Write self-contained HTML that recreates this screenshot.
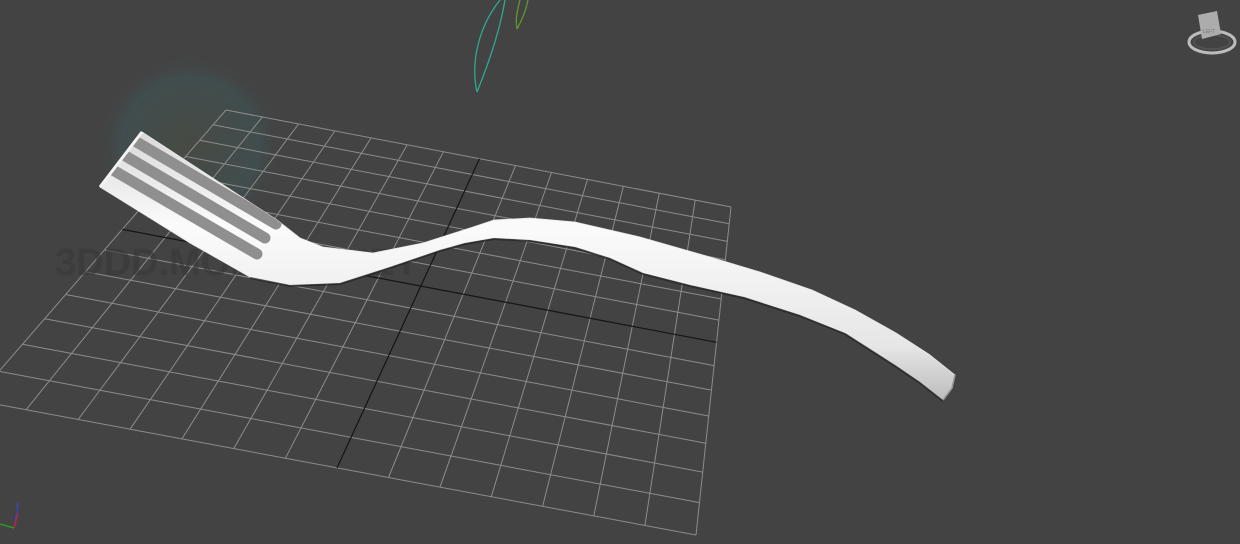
<!DOCTYPE html>
<html><head><meta charset="utf-8"><style>
html,body{margin:0;padding:0;background:#434343;overflow:hidden}
svg{display:block}
</style></head><body>
<svg id="s" width="1240" height="544" viewBox="0 0 1240 544" xmlns="http://www.w3.org/2000/svg">
<defs>
<radialGradient id="glow" cx="0.5" cy="0.5" r="0.5">
<stop offset="0" stop-color="#4a4f45" stop-opacity="0.6"/>
<stop offset="0.75" stop-color="#3f5455" stop-opacity="0.6"/>
<stop offset="1" stop-color="#434343" stop-opacity="0"/>
</radialGradient>
<linearGradient id="hg" x1="0" y1="0" x2="0" y2="1">
<stop offset="0" stop-color="#d8d8d8"/>
<stop offset="0.35" stop-color="#fbfbfb"/>
<stop offset="0.8" stop-color="#e6e6e6"/>
<stop offset="1" stop-color="#bdbdbd"/>
</linearGradient>
<clipPath id="fc"><path d="M100,187 L142,132 L277,220 L300,238 L323,247 L373,253 L423,243 L473,227 L494,220 L530,218 L575,222 L640,237 L710,257 L760,272 L812,290 L855,310 L896,333 L930,355 L955,375 L952,388 L943,400 L920,382 L895,365 L845,333 L800,315 L744,297 L690,285 L643,273 L610,258 L575,247 L530,240 L494,238 L465,243 L440,250 L390,267 L340,283 L290,285 L250,277 L190,243 Z"/></clipPath>
</defs>
<rect width="1240" height="544" fill="#434343"/>
<ellipse cx="190" cy="145" rx="92" ry="90" fill="url(#glow)"/>
<g id="grid" stroke="#8c8c8c" stroke-width="1" fill="none"></g>
<g id="axes" stroke="#151515" stroke-width="1.2" fill="none"></g>
<text x="55" y="275" font-family="Liberation Sans, sans-serif" font-weight="bold" font-size="38" fill="#383838" opacity="0.6">3DDD.MODELS.NET</text>
<path d="M100,187 L142,132 L277,220 L300,238 L323,247 L373,253 L423,243 L473,227 L494,220 L530,218 L575,222 L640,237 L710,257 L760,272 L812,290 L855,310 L896,333 L930,355 L955,375 L952,388 L943,400 L920,382 L895,365 L845,333 L800,315 L744,297 L690,285 L643,273 L610,258 L575,247 L530,240 L494,238 L465,243 L440,250 L390,267 L340,283 L290,285 L250,277 L190,243 Z" fill="url(#hg)" stroke="#e8e8e8" stroke-width="0.8" stroke-linejoin="round"/>
<path d="M250,278 L290,286 L340,284 L390,268 L440,251 L465,244 L494,239 L530,241 L575,248 L610,259 L643,274 L690,286 L744,298 L800,316 L845,334 L895,366 L920,383 L943,401" fill="none" stroke="#222" stroke-width="2" opacity="0.7" stroke-linejoin="round"/>
<g clip-path="url(#fc)" stroke="#8f8f8f" stroke-width="11" stroke-linecap="round">
<line x1="128" y1="137" x2="276" y2="224"/>
<line x1="117" y1="151" x2="265" y2="238"/>
<line x1="106" y1="166" x2="257" y2="254"/>
</g>
<path d="M100,187 L142,132" stroke="#f4f4f4" stroke-width="3"/>
<path d="M955,375 L952,388 L943,400" stroke="#999" stroke-width="1.5" fill="none"/>
<path d="M477,92 C470,60 480,25 500,0 M477,92 C490,60 500,30 505,0" stroke="#2fa88e" stroke-width="1.3" fill="none"/>
<path d="M517,29 C515,18 518,8 520,0 M517,29 C522,20 526,10 528,0" stroke="#5a9a2a" stroke-width="1.3" fill="none"/>
<ellipse cx="1212" cy="42" rx="23" ry="11" fill="none" stroke="#bcbcbc" stroke-width="3"/>
<ellipse cx="1212" cy="42" rx="18" ry="7" fill="none" stroke="#555" stroke-width="1.5"/>
<polygon points="1198,15 1217,11 1221,34 1202,39" fill="#acacac"/>
<text x="1203" y="33" font-family="Liberation Sans, sans-serif" font-size="5" fill="#777">LEFT</text>
<line x1="14" y1="528" x2="18" y2="505" stroke="#3344cc" stroke-width="1.2"/>
<line x1="14" y1="528" x2="0" y2="524" stroke="#2a2" stroke-width="1.2"/>
<line x1="14" y1="528" x2="18" y2="513" stroke="#c22" stroke-width="1.2"/>
<text x="16" y="506" font-family="Liberation Sans, sans-serif" font-size="6" fill="#4455dd">z</text>
</svg>
<script>
(function(){
var P=[[226,110],[731,207],[696,535],[-26,400]];
function solve(A,b){var n=b.length;for(var i=0;i<n;i++){var m=i;for(var k=i+1;k<n;k++)if(Math.abs(A[k][i])>Math.abs(A[m][i]))m=k;var t=A[i];A[i]=A[m];A[m]=t;t=b[i];b[i]=b[m];b[m]=t;for(var k=i+1;k<n;k++){var f=A[k][i]/A[i][i];for(var j=i;j<n;j++)A[k][j]-=f*A[i][j];b[k]-=f*b[i];}}var x=new Array(n);for(var i=n-1;i>=0;i--){var s=b[i];for(var j=i+1;j<n;j++)s-=A[i][j]*x[j];x[i]=s/A[i][i];}return x;}
var S=[[0,0],[1,0],[1,1],[0,1]],A=[],b=[];
for(var i=0;i<4;i++){var u=S[i][0],v=S[i][1],X=P[i][0],Y=P[i][1];A.push([u,v,1,0,0,0,-u*X,-v*X]);b.push(X);A.push([0,0,0,u,v,1,-u*Y,-v*Y]);b.push(Y);}
var h=solve(A,b);
function m(u,v){var w=h[6]*u+h[7]*v+1;return [(h[0]*u+h[1]*v+h[2])/w,(h[3]*u+h[4]*v+h[5])/w];}
var N=14,g=document.getElementById('grid'),ax=document.getElementById('axes'),ns='http://www.w3.org/2000/svg';
function L(p,q,par){var l=document.createElementNS(ns,'line');l.setAttribute('x1',p[0].toFixed(1));l.setAttribute('y1',p[1].toFixed(1));l.setAttribute('x2',q[0].toFixed(1));l.setAttribute('y2',q[1].toFixed(1));par.appendChild(l);}
for(var i=0;i<=N;i++){var t=i/N;var par=(i==N/2)?ax:g;L(m(t,0),m(t,1),par);L(m(0,t),m(1,t),par);}
})();
</script>
</body></html>
